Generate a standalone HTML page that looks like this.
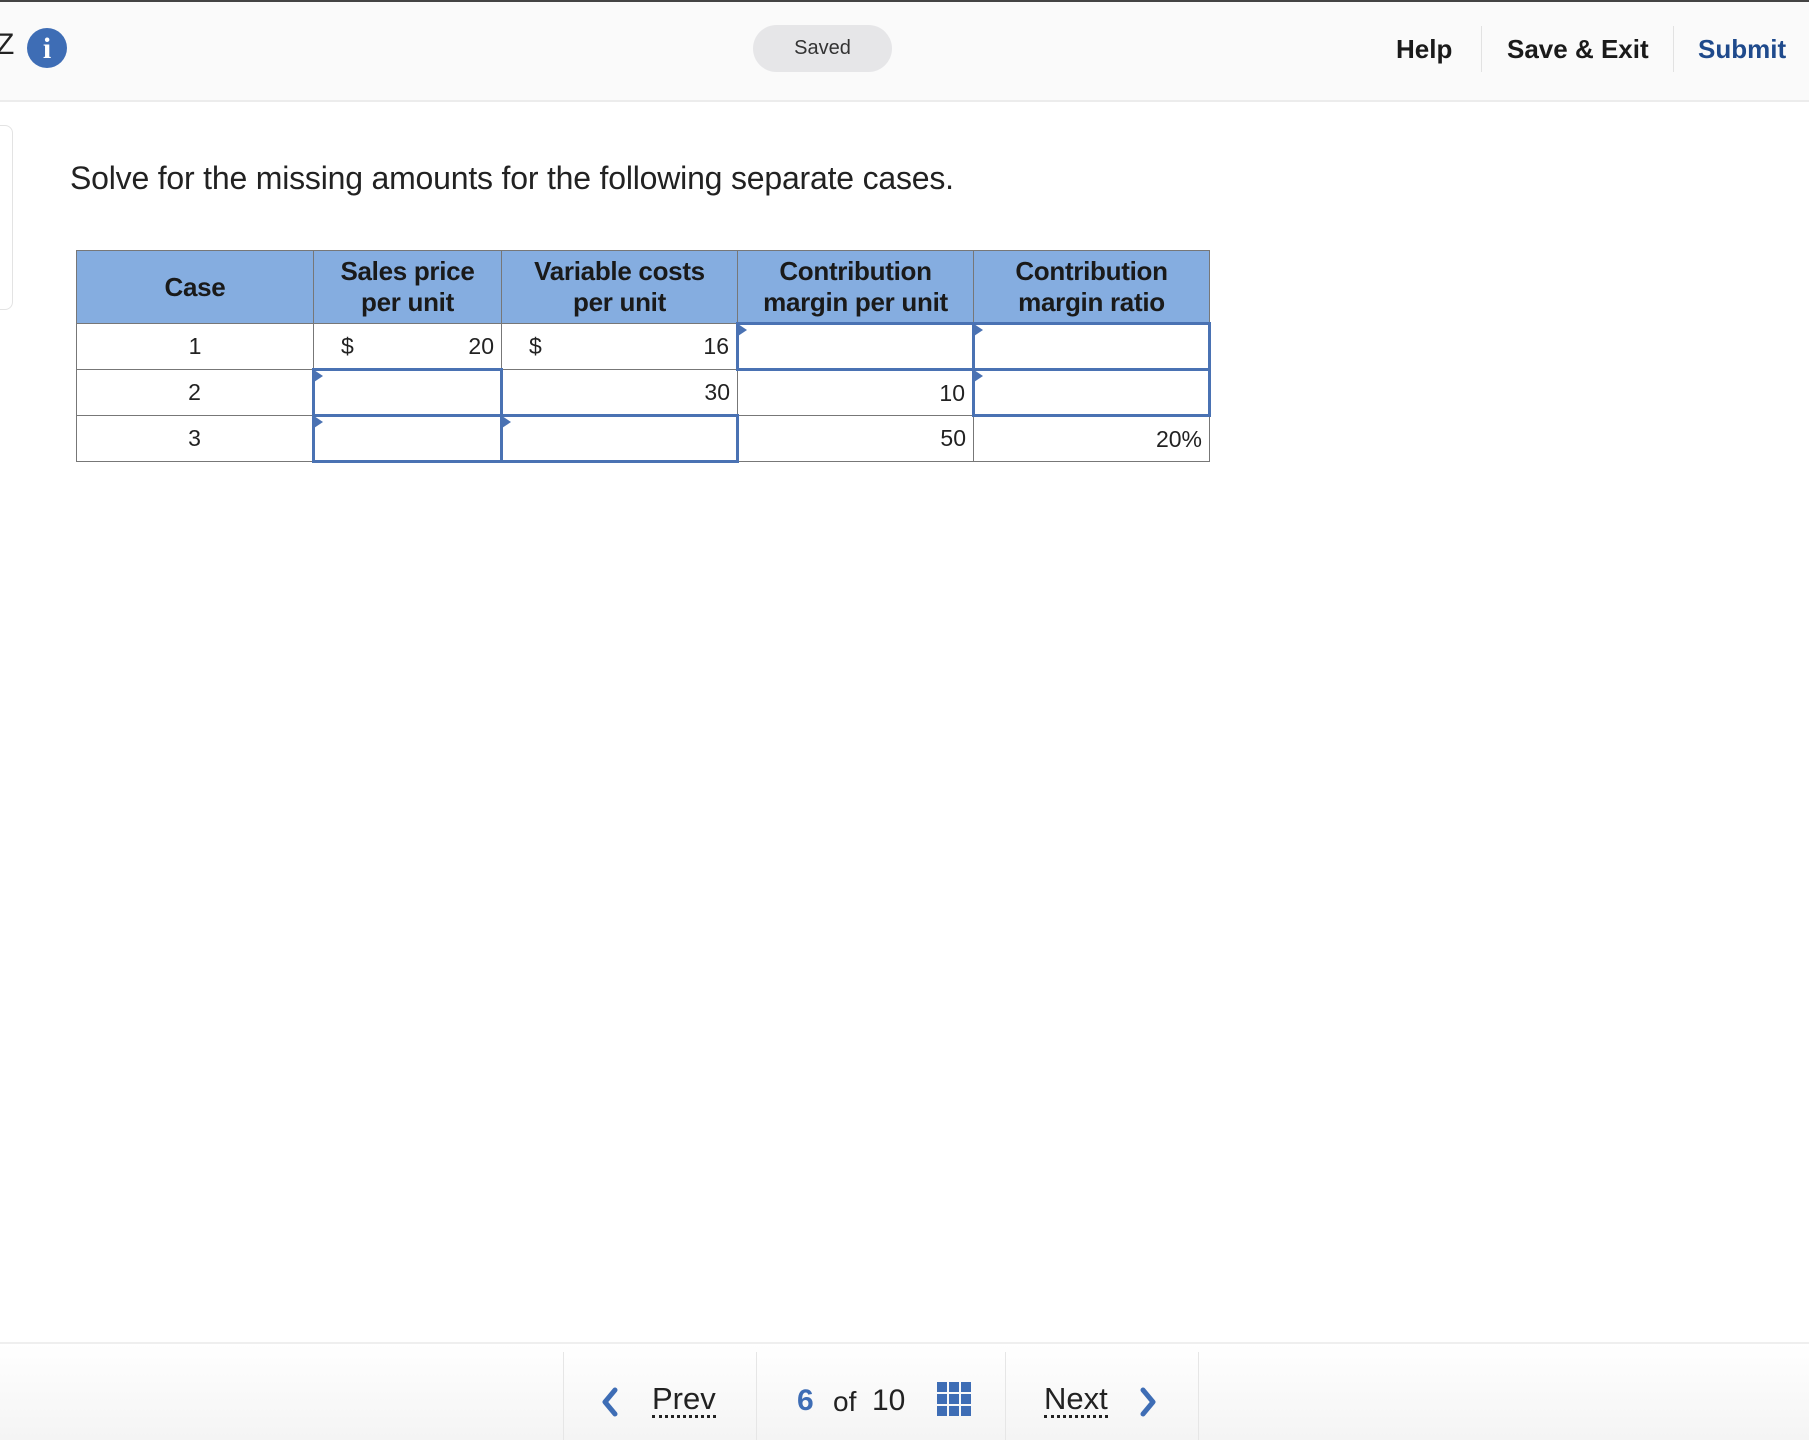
<!DOCTYPE html>
<html><head><meta charset="utf-8"><style>
*{margin:0;padding:0;box-sizing:border-box}
body{width:1809px;height:1440px;background:#fff;font-family:"Liberation Sans",sans-serif;position:relative;overflow:hidden;color:#222}
.hdr{position:absolute;left:0;top:0;width:1809px;height:102px;background:#fafafa;border-top:2px solid #444;border-bottom:2px solid #ececec}
.abs{position:absolute}
.pill{left:753px;top:25px;width:139px;height:47px;border-radius:24px;background:#e6e6e8;font-size:20px;color:#333;text-align:center;line-height:47px}
.nav{font-weight:bold;font-size:26px;top:34px;color:#1a1a1a}
.sep{width:1px;height:46px;top:26px;background:#e2e2e2}
table{position:absolute;left:76px;top:250px;border-collapse:collapse;font-size:23px}
td{border:1.5px solid #777;height:46px;padding:0 7px}
th{background:#85ade0;border:1.5px solid #777;height:73px;font-size:26px;line-height:31px;font-weight:bold;color:#1a1a1a;letter-spacing:-0.3px}
.inp{border:3px solid #4a72b3;position:relative}
.inp::before{content:"";position:absolute;left:0;top:0;border-left:9px solid #4a72b3;border-top:6px solid transparent;border-bottom:6px solid transparent;transform:translate(-1px,-1px)}
.r{text-align:right}.c{text-align:center}
.foot{position:absolute;left:0;top:1342px;width:1809px;height:98px;border-top:2px solid #efefef;background:linear-gradient(#fff,#f4f4f4)}
</style></head><body>
<div class="hdr"></div>
<div class="abs" style="left:-4px;top:28px;font-size:30px;color:#222">Z</div>
<div class="abs" style="left:27px;top:28px;width:40px;height:40px;border-radius:50%;background:#3e6db5;color:#fff;font-family:'Liberation Serif',serif;font-weight:bold;font-size:30px;text-align:center;line-height:42px">i</div>
<div class="abs pill">Saved</div>
<div class="abs nav" style="left:1396px">Help</div>
<div class="abs sep" style="left:1481px"></div>
<div class="abs nav" style="left:1507px">Save &amp; Exit</div>
<div class="abs sep" style="left:1673px"></div>
<div class="abs nav" style="left:1698px;color:#1f4a8c">Submit</div>
<div class="abs" style="left:-10px;top:125px;width:23px;height:185px;border:1.5px solid #e3e3e3;border-radius:8px"></div>
<div class="abs" style="left:70px;top:160px;font-size:32px;color:#222;letter-spacing:-0.2px">Solve for the missing amounts for the following separate cases.</div>
<table>
<tr><th style="width:237px">Case</th><th style="width:188px">Sales price<br>per unit</th><th style="width:236px">Variable costs<br>per unit</th><th style="width:236px">Contribution<br>margin per unit</th><th style="width:236px">Contribution<br>margin ratio</th></tr>
<tr><td class="c">1</td><td><span style="float:left;margin-left:20px">$</span><span style="float:right">20</span></td><td><span style="float:left;margin-left:20px">$</span><span style="float:right">16</span></td><td class="inp"></td><td class="inp"></td></tr>
<tr><td class="c">2</td><td class="inp"></td><td class="r">30</td><td class="r">10</td><td class="inp"></td></tr>
<tr><td class="c">3</td><td class="inp"></td><td class="inp"></td><td class="r">50</td><td class="r">20%</td></tr>
</table>
<div class="foot"></div>
<div class="abs" style="left:563px;top:1352px;width:1px;height:88px;background:#e6e6e6"></div>
<div class="abs" style="left:756px;top:1352px;width:1px;height:88px;background:#e6e6e6"></div>
<div class="abs" style="left:1005px;top:1352px;width:1px;height:88px;background:#e6e6e6"></div>
<div class="abs" style="left:1198px;top:1352px;width:1px;height:88px;background:#e6e6e6"></div>
<svg class="abs" style="left:600px;top:1386px" width="20" height="32"><path d="M15 4 L5 16 L15 28" stroke="#3e6db5" stroke-width="5" fill="none" stroke-linecap="round" stroke-linejoin="round"/></svg>
<div class="abs" style="left:652px;top:1383px;font-size:31px;color:#222;border-bottom:3px dotted #222;line-height:32px">Prev</div>
<div class="abs" style="left:797px;top:1384px;font-size:30px;color:#3e6db5;font-weight:bold">6</div>
<div class="abs" style="left:833px;top:1386px;font-size:28px;color:#222">of</div>
<div class="abs" style="left:872px;top:1384px;font-size:30px;color:#222">10</div>
<svg class="abs" style="left:937px;top:1382px" width="35" height="35"><g fill="#3e6db5"><rect x="0" y="0" width="10" height="10"/><rect x="12" y="0" width="10" height="10"/><rect x="24" y="0" width="10" height="10"/><rect x="0" y="12" width="10" height="10"/><rect x="12" y="12" width="10" height="10"/><rect x="24" y="12" width="10" height="10"/><rect x="0" y="24" width="10" height="10"/><rect x="12" y="24" width="10" height="10"/><rect x="24" y="24" width="10" height="10"/></g></svg>
<div class="abs" style="left:1044px;top:1383px;font-size:31px;color:#222;border-bottom:3px dotted #222;line-height:32px">Next</div>
<svg class="abs" style="left:1138px;top:1386px" width="20" height="32"><path d="M5 4 L15 16 L5 28" stroke="#3e6db5" stroke-width="5" fill="none" stroke-linecap="round" stroke-linejoin="round"/></svg>
</body></html>
